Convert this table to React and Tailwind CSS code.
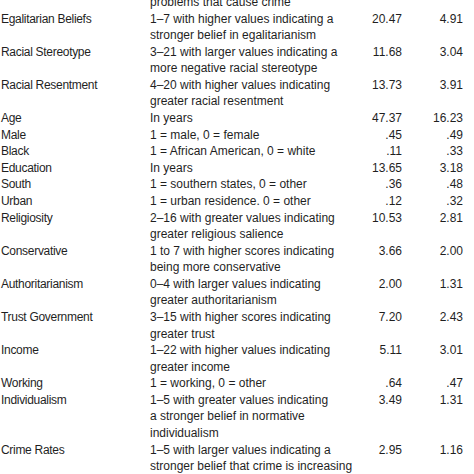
const rows = [
  ['', ['problems that cause crime'], '', ''],
  ['Egalitarian Beliefs', ['1–7 with higher values indicating a', 'stronger belief in egalitarianism'], '20.47', '4.91'],
  ['Racial Stereotype', ['3–21 with larger values indicating a', 'more negative racial stereotype'], '11.68', '3.04'],
  ['Racial Resentment', ['4–20 with higher values indicating', 'greater racial resentment'], '13.73', '3.91'],
  ['Age', ['In years'], '47.37', '16.23'],
  ['Male', ['1 = male, 0 = female'], '.45', '.49'],
  ['Black', ['1 = African American, 0 = white'], '.11', '.33'],
  ['Education', ['In years'], '13.65', '3.18'],
  ['South', ['1 = southern states, 0 = other'], '.36', '.48'],
  ['Urban', ['1 = urban residence. 0 = other'], '.12', '.32'],
  ['Religiosity', ['2–16 with greater values indicating', 'greater religious salience'], '10.53', '2.81'],
  ['Conservative', ['1 to 7 with higher scores indicating', 'being more conservative'], '3.66', '2.00'],
  ['Authoritarianism', ['0–4 with larger values indicating', 'greater authoritarianism'], '2.00', '1.31'],
  ['Trust Government', ['3–15 with higher scores indicating', 'greater trust'], '7.20', '2.43'],
  ['Income', ['1–22 with higher values indicating', 'greater income'], '5.11', '3.01'],
  ['Working', ['1 = working, 0 = other'], '.64', '.47'],
  ['Individualism', ['1–5 with greater values indicating', 'a stronger belief in normative', 'individualism'], '3.49', '1.31'],
  ['Crime Rates', ['1–5 with larger values indicating a', 'stronger belief that crime is increasing'], '2.95', '1.16'],
]

export default function App() {
  return (
    <div className="w-[474px] h-[474px] overflow-hidden bg-white text-[#1f1f1f] text-[12px] leading-[16.58px] font-['Liberation_Sans',Arial,sans-serif]">
      <div className="-mt-[6px] grid grid-cols-[150px_200px_52px_61px]">
        {rows.map(([label, desc, mean, sd], i) => (
          <div key={i} className="contents">
            <div className="pl-px tracking-[-0.3px]">{label}</div>
            <div>
              {desc.map((d, j) => (
                <div key={j} className="whitespace-nowrap">{d}</div>
              ))}
            </div>
            <div className="text-right">{mean}</div>
            <div className="text-right">{sd}</div>
          </div>
        ))}
      </div>
    </div>
  )
}
